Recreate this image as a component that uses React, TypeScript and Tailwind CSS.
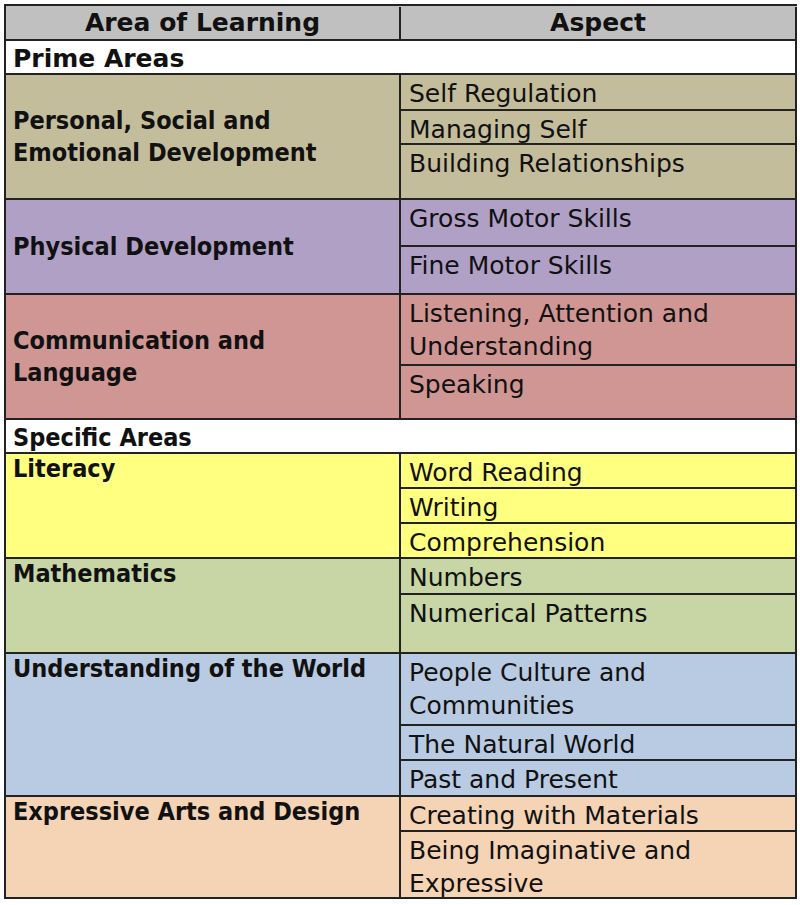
import React from "react";

type Aspect = { text: React.ReactNode; h: string };
type Group = {
  area: React.ReactNode;
  bg: string;
  h: string;
  centered: boolean;
  aspects: Aspect[];
};

const prime: Group[] = [
  {
    area: (
      <>
        Personal, Social and
        <br />
        Emotional Development
      </>
    ),
    bg: "bg-[#c4bd9b]",
    h: "h-[125px]",
    centered: true,
    aspects: [
      { text: "Self Regulation", h: "h-[36px]" },
      { text: "Managing Self", h: "h-[34px]" },
      { text: "Building Relationships", h: "h-[55px]" },
    ],
  },
  {
    area: "Physical Development",
    bg: "bg-[#b0a0c6]",
    h: "h-[95px]",
    centered: true,
    aspects: [
      { text: "Gross Motor Skills", h: "h-[47px]" },
      { text: "Fine Motor Skills", h: "h-[48px]" },
    ],
  },
  {
    area: (
      <>
        Communication and
        <br />
        Language
      </>
    ),
    bg: "bg-[#d09694]",
    h: "h-[125px]",
    centered: true,
    aspects: [
      {
        text: (
          <>
            Listening, Attention and
            <br />
            Understanding
          </>
        ),
        h: "h-[71px]",
      },
      { text: "Speaking", h: "h-[54px]" },
    ],
  },
];

const specific: Group[] = [
  {
    area: "Literacy",
    bg: "bg-[#ffff80]",
    h: "h-[105px]",
    centered: false,
    aspects: [
      { text: "Word Reading", h: "h-[35px]" },
      { text: "Writing", h: "h-[35px]" },
      { text: "Comprehension", h: "h-[35px]" },
    ],
  },
  {
    area: "Mathematics",
    bg: "bg-[#c7d6a4]",
    h: "h-[95px]",
    centered: false,
    aspects: [
      { text: "Numbers", h: "h-[36px]" },
      { text: "Numerical Patterns", h: "h-[59px]" },
    ],
  },
  {
    area: "Understanding of the World",
    bg: "bg-[#b9cbe2]",
    h: "h-[143px]",
    centered: false,
    aspects: [
      {
        text: (
          <>
            People Culture and
            <br />
            Communities
          </>
        ),
        h: "h-[72px]",
      },
      { text: "The Natural World", h: "h-[35px]" },
      { text: "Past and Present", h: "h-[36px]" },
    ],
  },
  {
    area: "Expressive Arts and Design",
    bg: "bg-[#f5d3b5]",
    h: "h-[102px]",
    centered: false,
    aspects: [
      { text: "Creating with Materials", h: "h-[35px]" },
      {
        text: (
          <>
            Being Imaginative and
            <br />
            Expressive
          </>
        ),
        h: "h-[67px]",
      },
    ],
  },
];

const condensedBold = {
  fontFamily: '"DejaVu Sans Condensed", "DejaVu Sans", Verdana, sans-serif',
};

function GroupRow({ g }: { g: Group }) {
  return (
    <div className={`flex ${g.h} ${g.bg}`}>
      <div
        className={`w-[395px] shrink-0 border-r-2 border-b-2 border-[#222] pl-[7px] font-bold font-stretch-condensed ${
          g.centered
            ? "flex flex-col justify-center leading-[32px]"
            : "pt-[1px] leading-[28px]"
        }`}
        style={condensedBold}
      >
        <div>{g.area}</div>
      </div>
      <div className="flex flex-1 flex-col">
        {g.aspects.map((a, i) => (
          <div
            key={i}
            className={`${a.h} shrink-0 border-r-2 border-b-2 border-[#222] pl-[8px] pt-[2px] leading-[33px]`}
          >
            {a.text}
          </div>
        ))}
      </div>
    </div>
  );
}

export default function App() {
  return (
    <div
      className="min-h-[905px] w-[800px] bg-white pt-[4px] pl-[4px] text-[25px] text-[#111]"
      style={{ fontFamily: '"DejaVu Sans", Verdana, sans-serif' }}
    >
      <div className="w-[793px] border-t-2 border-l-2 border-[#222]">
        <div className="flex h-[35px] bg-[#c0c0c0] pt-[1px] font-bold leading-[32px]">
          <div className="w-[395px] shrink-0 border-r-2 border-b-2 border-[#222] text-center">
            Area of Learning
          </div>
          <div className="flex-1 border-r-2 border-b-2 border-[#222] text-center">
            Aspect
          </div>
        </div>
        <div className="h-[34px] border-r-2 border-b-2 border-[#222] bg-white pl-[7px] pt-[3px] font-bold leading-[30px]">
          Prime Areas
        </div>
        {prime.map((g, i) => (
          <GroupRow key={i} g={g} />
        ))}
        <div
          className="h-[34px] border-r-2 border-b-2 border-[#222] bg-white pl-[7px] pt-[3px] font-bold font-stretch-condensed leading-[30px]"
          style={condensedBold}
        >
          Specific Areas
        </div>
        {specific.map((g, i) => (
          <GroupRow key={i} g={g} />
        ))}
      </div>
    </div>
  );
}
